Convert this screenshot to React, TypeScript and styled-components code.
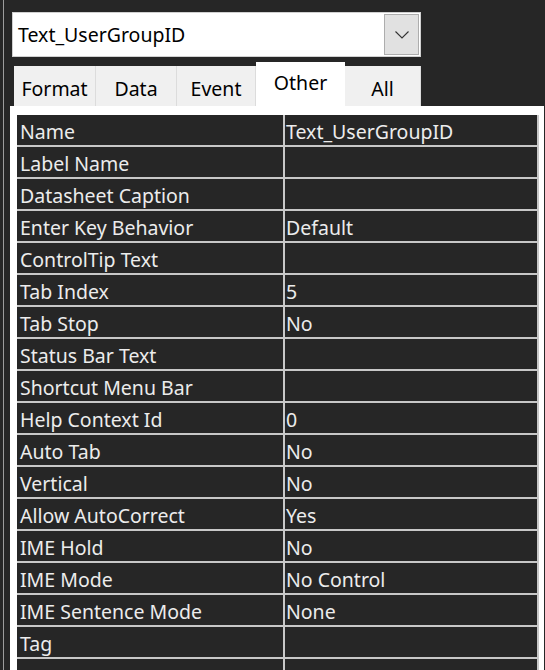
import styled, { createGlobalStyle } from 'styled-components';

const GlobalStyle = createGlobalStyle`
  html, body {
    margin: 0;
    padding: 0;
    background: #262626;
  }
  body {
    font-family: 'Noto Sans', 'Open Sans', 'Liberation Sans', sans-serif;
    overflow: hidden;
  }
`;

const Page = styled.div`
  width: 541px;
  height: 670px;
  margin-left: 3px;
  border-left: 1px solid #9c9c9c;
  padding: 12px 0 0 6px;
  box-sizing: border-box;
  display: flex;
  flex-direction: column;
  overflow: hidden;
`;

const Combo = styled.div`
  margin-left: 2px;
  width: 409px;
  height: 45px;
  box-sizing: border-box;
  background: #fff;
  border: 1px solid #d0d0d0;
  display: flex;
  align-items: center;
  padding: 1px;
`;

const ComboText = styled.div`
  flex: 1;
  padding: 0 0 0 4px;
  font-size: 19.5px;
  color: #000;
`;

const ComboButton = styled.div`
  width: 35px;
  height: 100%;
  box-sizing: border-box;
  background: #e1e1e1;
  border: 1px solid #adadad;
  display: flex;
  align-items: center;
  justify-content: center;
`;

const TabStrip = styled.div`
  margin: 5px 0 0 4px;
  display: flex;
  align-items: flex-end;
  height: 44px;
`;

const Tab = styled.div<{ $w: number; $active?: boolean }>`
  width: ${(p) => p.$w}px;
  height: ${(p) => (p.$active ? 44 : 40)}px;
  box-sizing: border-box;
  background: ${(p) => (p.$active ? '#fff' : '#f0f0f0')};
  border-right: ${(p) => (p.$active ? 'none' : '1px solid #dcdcdc')};
  display: flex;
  align-items: center;
  justify-content: center;
  padding-top: ${(p) => (p.$active ? 0 : 4)}px;
  padding-bottom: ${(p) => (p.$active ? 3 : 0)}px;
  font-size: 19.5px;
  color: #000;
`;

const Panel = styled.div`
  flex: 1;
  background: #fff;
  padding: 9px 5px 0 7px;
  min-height: 0;
`;

const Grid = styled.div`
  display: grid;
  grid-template-columns: 266px 1fr;
  grid-auto-rows: 30px;
  gap: 2px;
  background: #c8c8c8;
  padding: 0 2px 2px 0;
`;

const Cell = styled.div<{ $value?: boolean }>`
  background: #262626;
  color: #ececec;
  font-size: 19.5px;
  display: flex;
  align-items: center;
  padding: 3px 0 0 ${(p) => (p.$value ? 1 : 3)}px;
  white-space: nowrap;
`;

const rows: [string, string][] = [
  ['Name', 'Text_UserGroupID'],
  ['Label Name', ''],
  ['Datasheet Caption', ''],
  ['Enter Key Behavior', 'Default'],
  ['ControlTip Text', ''],
  ['Tab Index', '5'],
  ['Tab Stop', 'No'],
  ['Status Bar Text', ''],
  ['Shortcut Menu Bar', ''],
  ['Help Context Id', '0'],
  ['Auto Tab', 'No'],
  ['Vertical', 'No'],
  ['Allow AutoCorrect', 'Yes'],
  ['IME Hold', 'No'],
  ['IME Mode', 'No Control'],
  ['IME Sentence Mode', 'None'],
  ['Tag', ''],
  ['', ''],
];

const tabs: { label: string; w: number; active?: boolean }[] = [
  { label: 'Format', w: 82 },
  { label: 'Data', w: 81 },
  { label: 'Event', w: 79 },
  { label: 'Other', w: 89, active: true },
  { label: 'All', w: 76 },
];

export default function App() {
  return (
    <>
      <GlobalStyle />
      <Page>
        <Combo>
          <ComboText>Text_UserGroupID</ComboText>
          <ComboButton>
            <svg width="14" height="8" viewBox="0 0 14 8">
              <polyline points="0.5,0.5 7,7 13.5,0.5" fill="none" stroke="#333" strokeWidth="1.1" />
            </svg>
          </ComboButton>
        </Combo>
        <TabStrip>
          {tabs.map((t) => (
            <Tab key={t.label} $w={t.w} $active={t.active}>
              {t.label}
            </Tab>
          ))}
        </TabStrip>
        <Panel>
          <Grid>
            {rows.flatMap(([k, v], i) => [
              <Cell key={'k' + i}>{k}</Cell>,
              <Cell key={'v' + i} $value>
                {v}
              </Cell>,
            ])}
          </Grid>
        </Panel>
      </Page>
    </>
  );
}
